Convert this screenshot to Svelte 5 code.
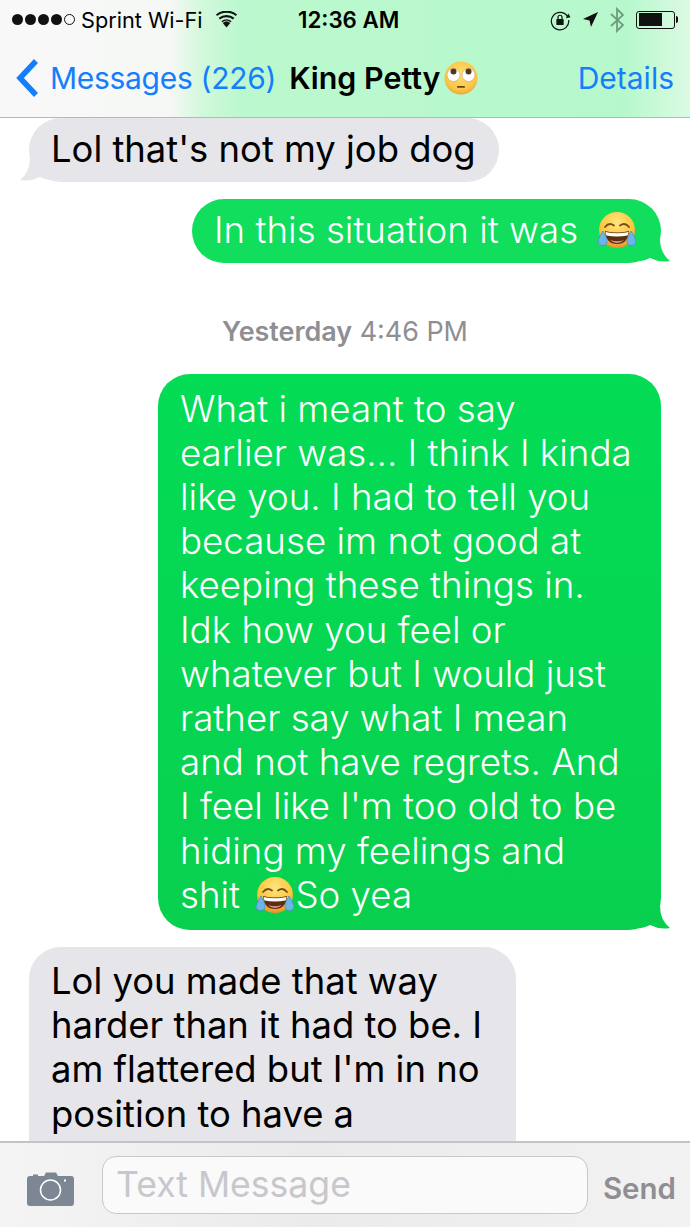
<script>
	const bigLines = [
		'What i meant to say',
		'earlier was... I think I kinda',
		'like you. I had to tell you',
		'because im not good at',
		'keeping these things in.',
		'Idk how you feel or',
		'whatever but I would just',
		'rather say what I mean',
		'and not have regrets. And',
		"I feel like I'm too old to be",
		'hiding my feelings and'
	];
	const replyLines = [
		'Lol you made that way',
		'harder than it had to be. I',
		"am flattered but I'm in no",
		'position to have a'
	];
</script>

{#snippet joy(cls)}
	<svg class={cls} viewBox="0 0 40 40" aria-hidden="true">
		<defs>
			<radialGradient id="joyface" cx="50%" cy="30%" r="70%">
				<stop offset="0" stop-color="#ffe680" />
				<stop offset="0.65" stop-color="#fcc63f" />
				<stop offset="1" stop-color="#e8922a" />
			</radialGradient>
		</defs>
		<circle cx="20" cy="20" r="18" fill="url(#joyface)" />
		<path d="M8 17q4-5 9-1.500M23 15.500q5-3.500 9 1.500" fill="none" stroke="#7a4a1a" stroke-width="1.800" stroke-linecap="round" />
		<path d="M8 21q12 3 24 0q-1 13-12 13t-12-13z" fill="#5d2f12" />
		<path d="M8.500 22q11.500 2.600 23 0l-.9 3.500q-11 2-21.200 0z" fill="#fff" />
		<path d="M13 30q7 2.500 14 0q-3 3-7 3t-7-3z" fill="#e89a8e" />
		<path d="M6 21q-3 5-4.500 8.500q-1.500 5 3 6q4.500 .6 5.500-3.500q.5-3-4-11z" fill="#6db4ea" stroke="#3f8ccc" stroke-width=".7" />
		<path d="M34 21q3 5 4.500 8.500q1.500 5-3 6q-4.500 .6-5.500-3.500q-.5-3 4-11z" fill="#6db4ea" stroke="#3f8ccc" stroke-width=".7" />
	</svg>
{/snippet}

{#snippet rolleyes()}
	<svg class="eyeroll" viewBox="0 0 34 34" aria-hidden="true">
		<defs>
			<radialGradient id="rollface" cx="50%" cy="40%" r="62%">
				<stop offset="0" stop-color="#ffe070" />
				<stop offset="0.75" stop-color="#fbc648" />
				<stop offset="1" stop-color="#e9a23a" />
			</radialGradient>
		</defs>
		<circle cx="17" cy="17" r="16.500" fill="url(#rollface)" />
		<circle cx="9.500" cy="14" r="6.500" fill="#fff" stroke="#c9a15a" stroke-width=".6" />
		<circle cx="24.500" cy="14" r="6.500" fill="#fff" stroke="#c9a15a" stroke-width=".6" />
		<circle cx="9.500" cy="10.500" r="3" fill="#4a3a2a" />
		<circle cx="24.500" cy="10.500" r="3" fill="#4a3a2a" />
		<rect x="13" y="25" width="8" height="1.800" rx=".9" fill="#6b4218" />
	</svg>
{/snippet}

{#snippet tailRight()}
	<svg class="tail tail-right" viewBox="0 0 30 24" aria-hidden="true">
		<path d="M0 0h20q0 14 10 22q-10 2-20-3q-6 3-10 3z" />
	</svg>
{/snippet}

{#snippet tailLeft()}
	<svg class="tail tail-left" viewBox="0 0 30 24" aria-hidden="true">
		<path d="M30 0h-20q0 14-10 22q10 2 20-3q6 3 10 3z" />
	</svg>
{/snippet}

<div class="phone">
	<header class="top">
		<div class="status">
			<div class="status-left">
				<span class="dots"><i></i><i></i><i></i><i></i><i class="empty"></i></span>
				<span>Sprint Wi-Fi</span>
				<svg class="wifi" viewBox="0 0 24 18" aria-hidden="true">
					<path d="M12 17.500L8 12.600a6 6 0 0 1 8 0z" />
					<path d="M6.600 10.800a8.500 8.500 0 0 1 10.800 0l-1 1.200a6.900 6.900 0 0 0-8.800 0z" />
					<path d="M3.700 7.200a13 13 0 0 1 16.600 0l-1.400 1.800a10.800 10.800 0 0 0-13.800 0z" />
					<path d="M.8 3.600a17.600 17.600 0 0 1 22.400 0l-1.400 1.800a15.400 15.400 0 0 0-19.600 0z" />
				</svg>
			</div>
			<span class="time">12:36 AM</span>
			<div class="status-right">
				<svg class="lock" viewBox="0 0 24 24" aria-hidden="true">
					<path d="M20 8a9.500 9.500 0 1 0 1.500 4" fill="none" stroke="#111" stroke-width="1.300" />
					<path d="M18.500 10l5-1-2.500-4z" fill="#111" />
					<rect x="8" y="11" width="8" height="6.500" rx="1" fill="#111" />
					<path d="M9.800 11V9a2.200 2.200 0 0 1 4.400 0v2" fill="none" stroke="#111" stroke-width="1.300" />
				</svg>
				<svg class="arrow" viewBox="0 0 18 18" aria-hidden="true">
					<path d="M17 1L1 8.500l7 1.500 1.500 7z" fill="#111" />
				</svg>
				<svg class="bt" viewBox="0 0 14 26" aria-hidden="true">
					<path d="M1 7l12 11-6 6V2l6 6L1 19" fill="none" stroke="#6d9c7e" stroke-width="1.800" />
				</svg>
				<div class="battery"><div class="charge"></div></div>
				<div class="nub"></div>
			</div>
		</div>
		<nav class="nav">
			<svg class="chevron" viewBox="0 0 24 40" aria-hidden="true">
				<path d="M20 3L4 20l16 17" fill="none" stroke="#157efb" stroke-width="5.500" />
			</svg>
			<span class="link back">Messages (226)</span>
			<span class="title">King Petty</span>
			{@render rolleyes()}
			<span class="link details">Details</span>
		</nav>
	</header>

	<main class="thread">
		<div class="bubble in first">
			<span>Lol that's not my job dog</span>
			{@render tailLeft()}
		</div>
		<div class="bubble out second">
			<span class="row">In this situation it was {@render joy('joy-a')}</span>
			{@render tailRight()}
		</div>
		<p class="stamp"><b>Yesterday</b> 4:46 PM</p>
		<div class="bubble out big">
			{#each bigLines as line}
				<div>{line}</div>
			{/each}
			<div class="row">shit {@render joy('joy-b')}So yea</div>
			{@render tailRight()}
		</div>
		<div class="bubble in reply">
			{#each replyLines as line}
				<div>{line}</div>
			{/each}
			<div>&nbsp;</div>
		</div>
	</main>

	<footer class="composer">
		<svg class="camera" viewBox="0 0 47 34" aria-hidden="true">
			<path fill-rule="evenodd" fill="#7d8794" d="M3 4h3V2.500h5V4h6l2-3.500h10L31 4h13a3 3 0 0 1 3 3v24a3 3 0 0 1-3 3H3a3 3 0 0 1-3-3V7a3 3 0 0 1 3-3z" />
			<circle cx="23.500" cy="18" r="10" fill="none" stroke="#fff" stroke-width="1.500" />
			<rect x="37" y="7.500" width="2" height="2" fill="#fff" />
		</svg>
		<div class="field">Text Message</div>
		<span class="send">Send</span>
	</footer>
</div>

<style>
	:global(body) {
		margin: 0;
		background: #fff;
	}

	.phone {
		width: 690px;
		height: 1227px;
		display: flex;
		flex-direction: column;
		overflow: hidden;
		font-family: Inter, "Liberation Sans", sans-serif;
		color: #000;
	}

	.top {
		flex: none;
		height: 117px;
		border-bottom: 1px solid #b5b8b6;
		background: linear-gradient(90deg, #f8f8f8 0, #f6f8f6 170px, #d4f8dd 200px, #bcf8cf 240px, #b6f8cc 625px, #dcfae3 690px);
	}

	.status {
		height: 39px;
		padding: 0 12px;
		display: flex;
		align-items: center;
		justify-content: space-between;
		position: relative;
		font-size: 21.7px;
	}

	.status-left {
		display: flex;
		align-items: center;
	}

	.dots {
		display: flex;
		gap: 2px;
		margin-right: 6px;
	}

	.dots i {
		width: 11px;
		height: 11px;
		border-radius: 50%;
		background: #111;
		box-sizing: border-box;
	}

	.dots i.empty {
		background: none;
		border: 1px solid #111;
	}

	.wifi {
		width: 23px;
		height: 17px;
		margin-left: 12px;
		fill: #111;
	}

	.time {
		position: absolute;
		left: 298px;
		font-size: 22.3px;
		font-weight: 600;
	}

	.status-right {
		display: flex;
		align-items: center;
	}

	.lock {
		width: 22px;
		height: 22px;
		margin-right: 11px;
	}

	.arrow {
		width: 17px;
		height: 17px;
		margin-right: 11px;
	}

	.bt {
		width: 14px;
		height: 26px;
		margin-right: 12px;
	}

	.battery {
		width: 39px;
		height: 18px;
		box-sizing: border-box;
		border: 1.500px solid #111;
		border-radius: 3px;
		padding: 1.500px;
	}

	.charge {
		width: 23px;
		height: 100%;
		background: #111;
	}

	.nub {
		width: 2px;
		height: 7px;
		margin-left: 1px;
		background: #111;
		border-radius: 0 2px 2px 0;
	}

	.nav {
		height: 78px;
		display: flex;
		align-items: center;
		padding: 0 16px;
		font-size: 30px;
		position: relative;
	}

	.chevron {
		width: 24px;
		height: 40px;
		margin-right: 10px;
		flex: none;
	}

	.link {
		color: #157efb;
	}

	.back {
		letter-spacing: -0.3px;
	}

	.title {
		font-size: 30.4px;
		font-weight: 600;
		margin-left: 13px;
	}

	.eyeroll {
		width: 34px;
		height: 34px;
		margin-left: 4px;
	}

	.details {
		margin-left: auto;
	}

	.thread {
		flex: 1;
		min-height: 0;
		overflow: hidden;
		display: flex;
		flex-direction: column;
		font-size: 36.4px;
		line-height: 44.2px;
	}

	.bubble {
		position: relative;
		flex: none;
		box-sizing: border-box;
		border-radius: 32px;
		white-space: nowrap;
	}

	.in {
		align-self: flex-start;
		margin-left: 29px;
		padding: 9px 22px;
		background: #e5e5ea;
		color: #000;
		fill: #e5e5ea;
	}

	.out {
		align-self: flex-end;
		margin-right: 29px;
		padding: 9px 22px;
		color: #fff;
		font-size: 36.7px;
		font-weight: 350;
	}

	.first {
		width: 470px;
		height: 64px;
	}

	.second {
		width: 469px;
		height: 64px;
		margin-top: 17px;
		background: #10de5c;
		fill: #10de5c;
	}

	.stamp {
		margin: 50px 0 0;
		height: 36px;
		font-size: 26.9px;
		line-height: 36px;
		text-align: center;
		color: #8e8e93;
	}

	.stamp b {
		font-weight: 600;
	}

	.big {
		width: 503px;
		height: 556px;
		margin-top: 25px;
		padding: 12.5px 22px;
		background: linear-gradient(180deg, #04dc55, #08d04e);
		fill: #08d04e;
	}

	.reply {
		width: 487px;
		margin-top: 17px;
		padding: 12px 22px;
	}

	.row {
		display: flex;
		align-items: center;
		white-space: pre;
	}

	.joy-a {
		width: 40px;
		height: 40px;
		margin-left: 9px;
		flex: none;
	}

	.joy-b {
		width: 40px;
		height: 40px;
		margin-left: 5px;
		flex: none;
	}

	.tail {
		position: absolute;
		bottom: 0;
		width: 30px;
		height: 24px;
	}

	.tail-right {
		right: -9px;
	}

	.tail-left {
		left: -9px;
	}

	.composer {
		flex: none;
		height: 86px;
		box-sizing: border-box;
		border-top: 2px solid #c4c4c4;
		background: linear-gradient(90deg, #f4f4f4, #ebebeb 45%, #f2f2f2);
		display: flex;
		align-items: center;
		padding: 0 14px 0 27px;
	}

	.camera {
		width: 47px;
		height: 34px;
		flex: none;
		margin-top: 7px;
	}

	.field {
		width: 486px;
		height: 58px;
		box-sizing: border-box;
		margin-left: 28px;
		padding-left: 13px;
		border: 1px solid #c8c8cc;
		border-radius: 14px;
		background: #fafafa;
		color: #c7c7cc;
		font-size: 35.6px;
		line-height: 55px;
	}

	.send {
		margin-left: 15px;
		margin-top: 5px;
		font-size: 29.5px;
		font-weight: 600;
		color: #8e8e93;
	}
</style>
